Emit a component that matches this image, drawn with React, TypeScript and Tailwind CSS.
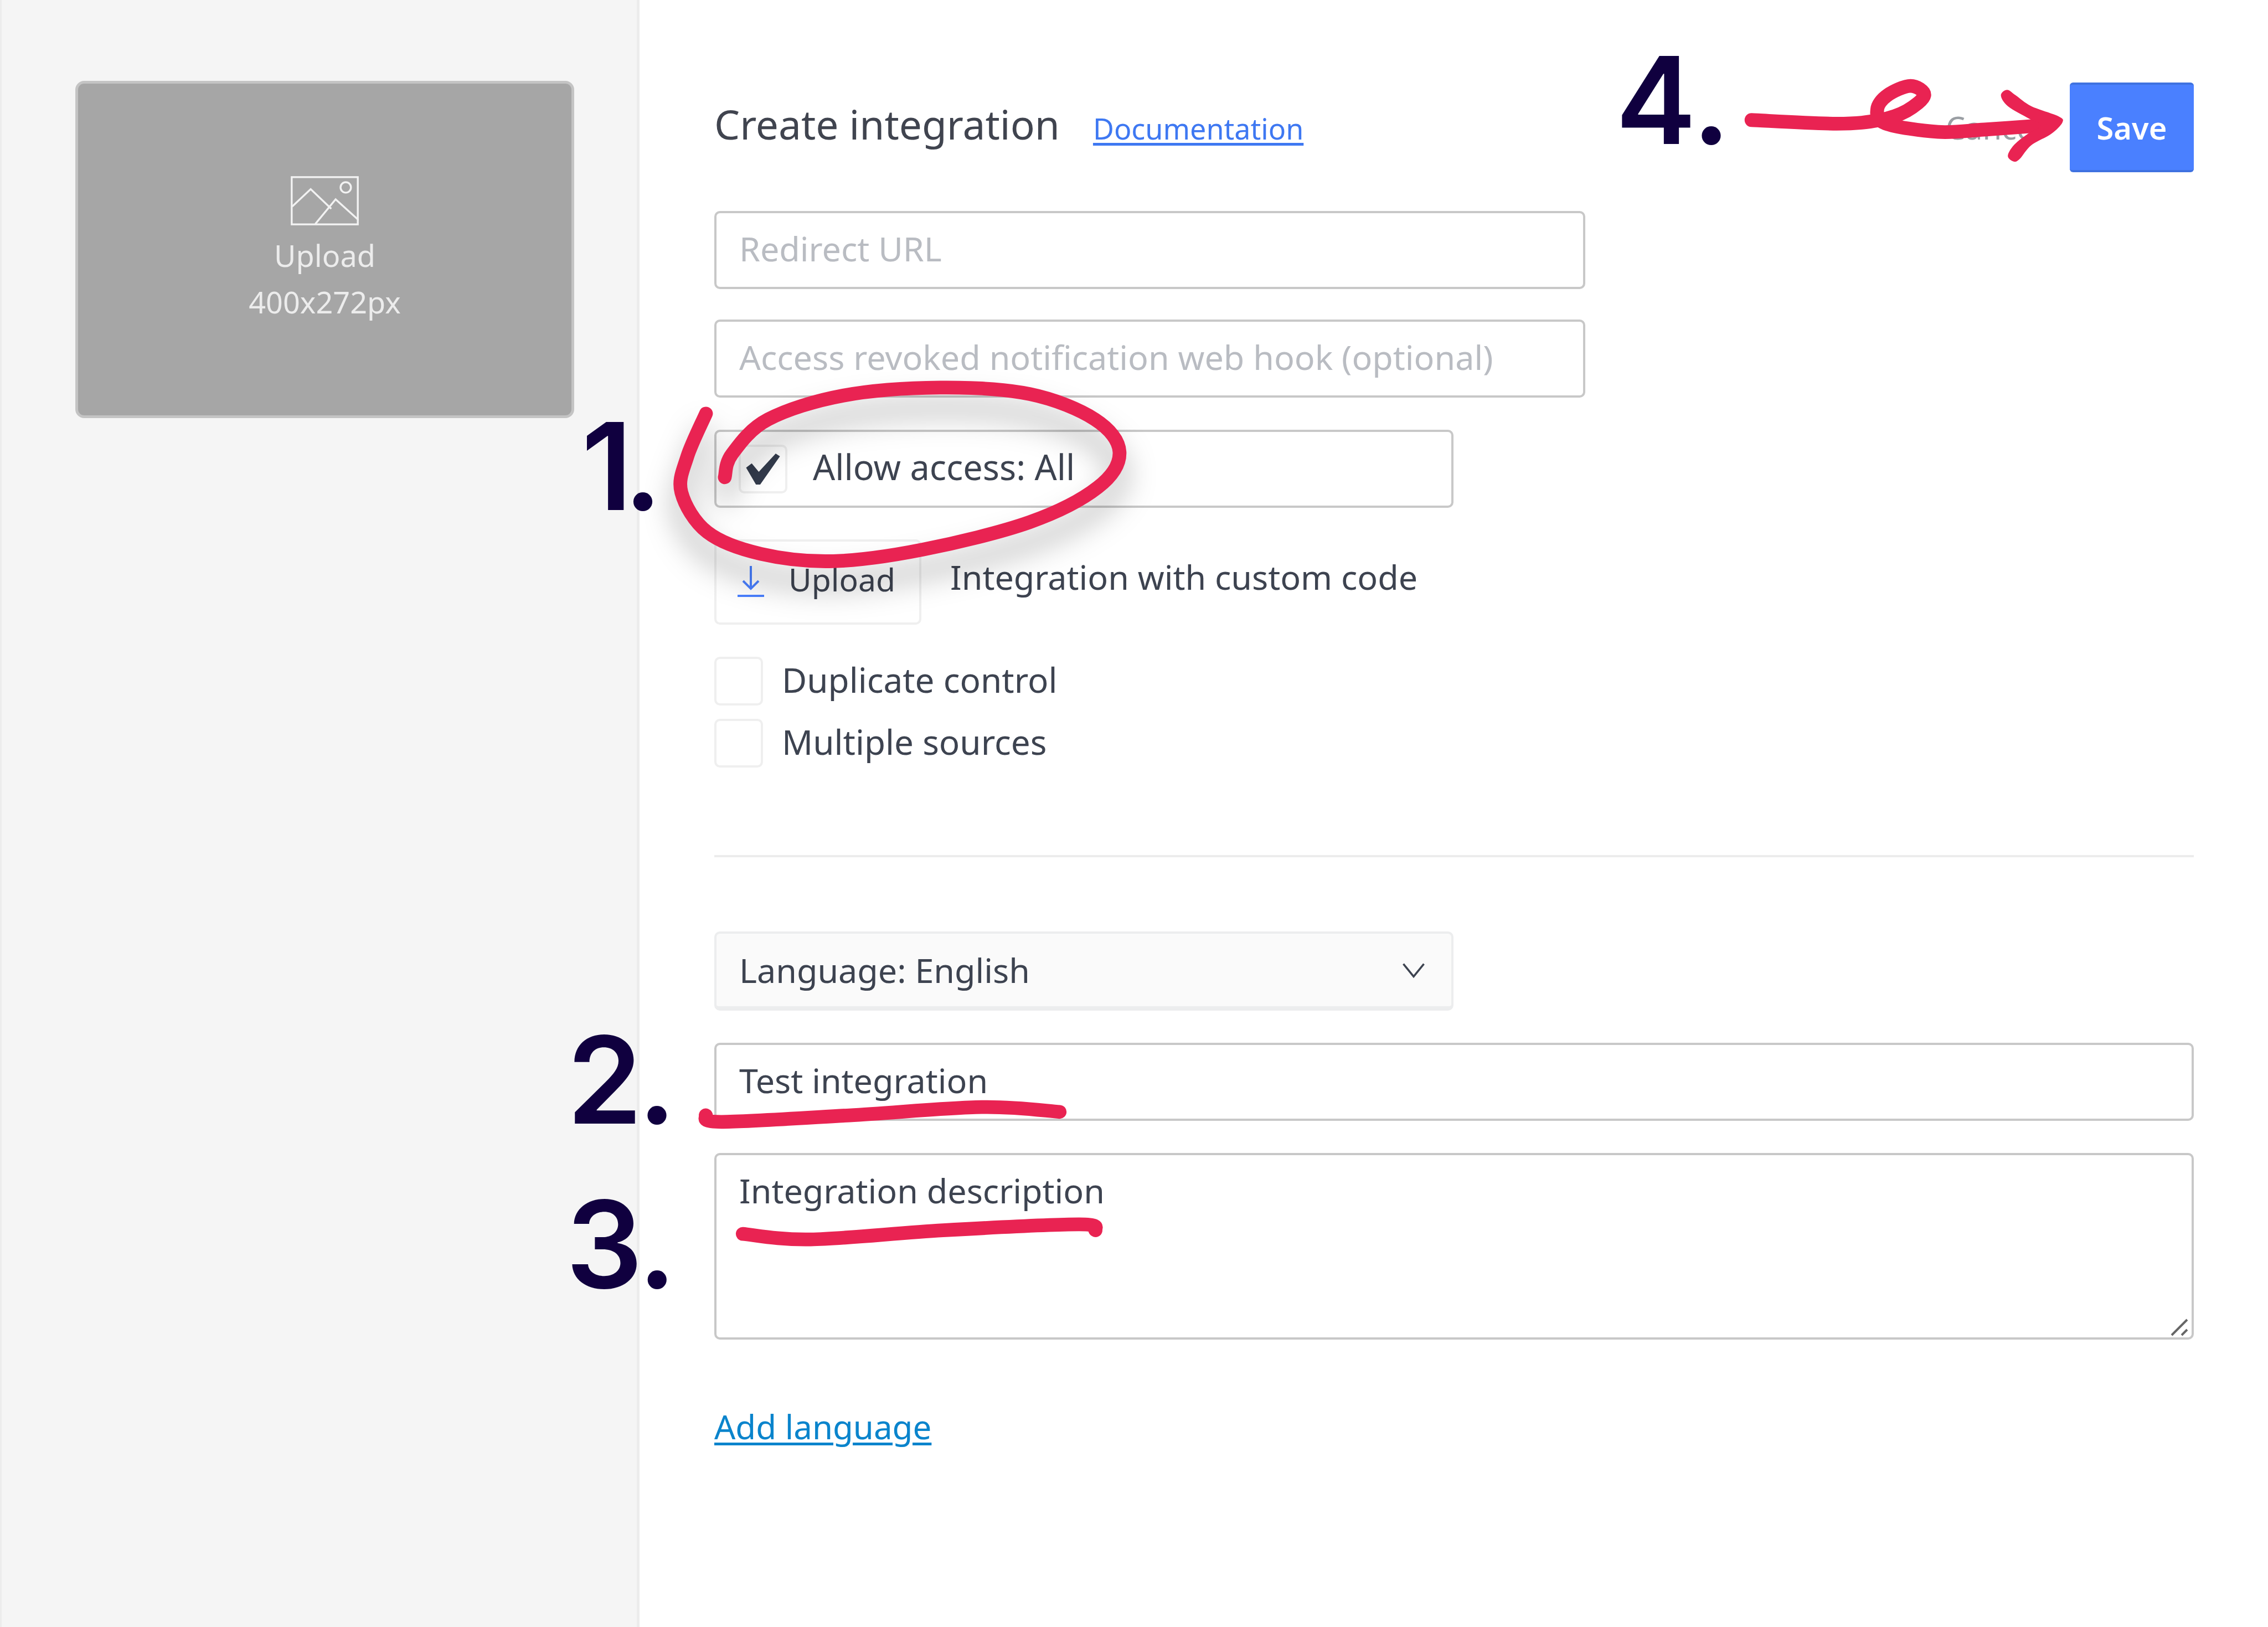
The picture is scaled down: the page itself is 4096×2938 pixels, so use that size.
const font = "font-['Noto_Sans',sans-serif]";

type Pt = [number, number];

// catmull-rom through the hand-read points of the marker strokes
const smooth = (pts: Pt[], closed = false) => {
  const n = pts.length;
  const at = (i: number) => (closed ? pts[(i + n) % n] : pts[Math.max(0, Math.min(n - 1, i))]);
  let d = `M${pts[0][0]} ${pts[0][1]}`;
  for (let i = 0; i < (closed ? n : n - 1); i++) {
    const [p0, p1, p2, p3] = [at(i - 1), at(i), at(i + 1), at(i + 2)];
    d += `C${p1[0] + (p2[0] - p0[0]) / 6} ${p1[1] + (p2[1] - p0[1]) / 6} ${p2[0] - (p3[0] - p1[0]) / 6} ${p2[1] - (p3[1] - p1[1]) / 6} ${p2[0]} ${p2[1]}`;
  }
  return closed ? d + "Z" : d;
};

const circleStroke: Pt[] = [
  [501, 330], [506, 314], [531, 290], [583, 273.5], [650, 268], [712, 272.5], [757, 290], [774, 312.6],
  [759, 337], [712, 361], [638, 380], [576, 388], [526, 383], [489, 368], [471, 340.5], [475, 316], [488, 286],
];
const arrowShaft: Pt[] = [
  [1211, 83], [1270, 85.5], [1299.6, 83], [1318.4, 76.6], [1330.5, 65.9], [1321, 59.4], [1305, 65.9],
  [1298, 75.6], [1303.6, 85.3], [1340, 91.2], [1372, 89.6], [1410, 86.9],
];
const arrowHead: Pt[] = [
  [1387.8, 62.1], [1393.7, 65.9], [1404.5, 73.4], [1423.3, 80.4], [1426, 84.7], [1418, 92.8], [1404.5, 100.4],
  [1396.4, 110], [1392.4, 111.7], [1388.3, 107.9], [1392.4, 100.4], [1401.8, 92.8], [1411.2, 86.6], [1403, 82],
  [1388.3, 73.4], [1383.5, 65.9],
];
const lineTwo: Pt[] = [[487.8, 771.2], [498.6, 775.7], [587.3, 771.2], [678.8, 765.5], [732.6, 768.8]];
const lineThree: Pt[] = [[513.4, 853.2], [560.4, 857], [651.9, 850.7], [746, 846.6], [757.4, 850.7]];

const Marks = () => (
  <svg viewBox="0 0 1568 1125" className="absolute inset-0 w-[4096px] h-[2938px] pointer-events-none">
    <path
      d={smooth(circleStroke)}
      fill="none"
      stroke="#e92352"
      strokeWidth={9.5}
      strokeLinecap="round"
      className="drop-shadow-[0_14px_10px_rgba(0,0,0,0.3)]"
    />
    <g fill="none" stroke="#e92352" strokeWidth={9.5} strokeLinecap="round">
      <path d={smooth(arrowShaft)} />
      <path d={smooth(lineTwo)} />
      <path d={smooth(lineThree)} />
    </g>
    <path d={smooth(arrowHead, true)} fill="#e92352" />
  </svg>
);

const Num = ({ label, className }: { label: string; className: string }) => (
  <div className={`absolute font-['Inter',sans-serif] font-semibold text-[218px] leading-none text-[#10003f] ${className}`}>
    {label}
  </div>
);

const Field = ({ value, placeholder, className = "" }: { value?: string; placeholder?: string; className?: string }) => (
  <input
    readOnly
    value={value}
    placeholder={placeholder}
    className={`h-[141px] border-4 border-[#c8c8c8] rounded-[10px] pl-[41px] pb-[6px] text-[61px] text-[#3d4350] placeholder:text-[#b9bcc2] outline-none ${className}`}
  />
);

const Box = ({ checked = false }: { checked?: boolean }) => (
  <div className="w-[88px] h-[88px] shrink-0 border-4 border-[#efefef] rounded-[10px] flex items-center justify-center">
    {checked && (
      <svg viewBox="0 0 24 22" className="w-[62px] h-[56px]">
        <path d="M0 10 L4 7 L9 13 L21 0 L24 2 L10 22 L7 22 Z" fill="#333b4c" />
      </svg>
    )}
  </div>
);

export default function App() {
  return (
    <div className={`relative flex w-[4096px] h-[2938px] overflow-hidden bg-white ${font}`}>
      <aside className="w-[1155px] shrink-0 bg-[#f5f5f5] border-r-[5px] border-l-[3px] border-[#ececec] pl-[133px] pt-[146px]">
        <div className="w-[901px] h-[609px] bg-[#a6a6a6] border-[5px] border-[#c4c4c4] rounded-[16px] flex flex-col items-center pt-[167px] text-[#ececec] text-[54px] leading-[84px]">
          <svg viewBox="202 121 47 34" className="w-[123px] h-[89px] mb-[12px]" fill="none" stroke="#f2f2f2" strokeWidth={1.3}>
            <rect x="202.7" y="121.7" width="45.6" height="32.6" />
            <path d="M203 142 L215.8 130 L230 143.5" />
            <path d="M219 154 L233 137 L249 151.5" />
            <circle cx="240" cy="128.8" r="3.6" />
          </svg>
          <span>Upload</span>
          <span>400x272px</span>
        </div>
      </aside>

      <main className="flex-1 pl-[135px] pr-[134px] pt-[149px] flex flex-col">
        <div className="flex items-center justify-between h-[162px]">
          <div className="flex items-center gap-[60px]">
            <h1 className="text-[73px] text-[#40444f] font-normal mb-[12px]">Create integration</h1>
            <a className="text-[52px] text-[#3e78f2] underline decoration-[5px] underline-offset-[6px] mt-[4px]">Documentation</a>
          </div>
          <div className="flex items-center gap-[50px]">
            <span className="text-[56px] text-[#9a9ea3]">Cancel</span>
            <button className="w-[224px] h-[162px] bg-[#4a80ff] border-y-[4px] border-[#3f72e0] rounded-[6px] text-white text-[56px] font-semibold">
              Save
            </button>
          </div>
        </div>

        <div className="flex flex-col items-start mt-[70px]">
          <Field placeholder="Redirect URL" className="w-[1573px]" />
          <Field placeholder="Access revoked notification web hook (optional)" className="w-[1573px] mt-[55px]" />
          <div className="w-[1335px] h-[141px] mt-[58px] border-4 border-[#c8c8c8] rounded-[10px] flex items-center pl-[40px] gap-[46px] text-[63px] text-[#3d4350]">
            <Box checked />
            <span className="mb-[6px]">Allow access: All</span>
          </div>
          <div className="flex items-start mt-[57px] text-[61px] text-[#3d4350]">
            <div className="w-[374px] h-[154px] border-4 border-[#efefef] rounded-[10px] flex items-start pl-[38px] pt-[26px] gap-[44px] text-[57px]">
              <svg viewBox="0 0 48 56" className="w-[48px] h-[56px] mt-[18px]" fill="none" stroke="#4a80ff" strokeWidth={4}>
                <path d="M24 0 V40 M10 27 L24 41 L38 27 M0 54 H48" />
              </svg>
              <span>Upload</span>
            </div>
            <span className="ml-[52px] mt-[22px]">Integration with custom code</span>
          </div>
          <label className="flex items-center h-[88px] gap-[34px] mt-[58px] text-[62px] text-[#3d4350]">
            <Box />
            <span className="mb-[6px]">Duplicate control</span>
          </label>
          <label className="flex items-center h-[88px] gap-[34px] mt-[24px] text-[62px] text-[#3d4350]">
            <Box />
            <span className="mb-[6px]">Multiple sources</span>
          </label>
        </div>

        <hr className="mt-[158px] border-t-4 border-[#ececec]" />

        <div className="w-[1335px] h-[143px] mt-[134px] bg-[#fafafa] border-4 border-b-8 border-[#ecedee] rounded-[10px] flex items-center justify-between pl-[41px] pr-[46px] text-[61px] text-[#3d4350]">
          <span>Language: English</span>
          <svg viewBox="0 0 46 34" className="w-[44px] h-[30px]" fill="none" stroke="#3d4350" strokeWidth={4}>
            <path d="M2 4 L23 30 L44 4" />
          </svg>
        </div>
        <Field value="Test integration" className="w-full mt-[58px]" />
        <div className="relative mt-[58px]">
          <textarea
            readOnly
            value="Integration description"
            className="block w-full h-[337px] resize-none border-4 border-[#c8c8c8] rounded-[10px] pl-[41px] pt-[18px] text-[61px] text-[#3d4350] outline-none"
          />
          <svg viewBox="0 0 32 32" className="absolute right-[10px] bottom-[6px] w-[32px] h-[32px]" fill="none" stroke="#666" strokeWidth={4}>
            <path d="M2 30 L30 2 M20 30 L30 20" />
          </svg>
        </div>
        <a className="mt-[112px] text-[60px] text-[#0a84cc] underline decoration-[5px] underline-offset-[6px]">Add language</a>
      </main>

      <Num label="1." className="left-[1050px] top-[733px] tracking-[-16px]" />
      <Num label="2." className="left-[1024px] top-[1841px] tracking-[-8px]" />
      <Num label="3." className="left-[1022px] top-[2138px] tracking-[-4px]" />
      <Num label="4." className="left-[2918px] top-[72px]" />
      <Marks />
    </div>
  );
}
